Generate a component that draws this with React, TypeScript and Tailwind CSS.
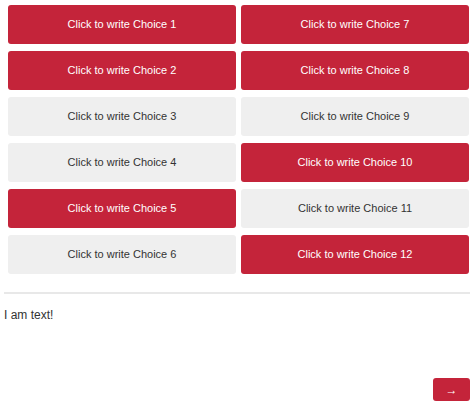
const choices = [
  { n: 1, on: true },
  { n: 7, on: true },
  { n: 2, on: true },
  { n: 8, on: true },
  { n: 3, on: false },
  { n: 9, on: false },
  { n: 4, on: false },
  { n: 10, on: true },
  { n: 5, on: true },
  { n: 11, on: false },
  { n: 6, on: false },
  { n: 12, on: true },
];

export default function App() {
  return (
    <div
      className="w-[474px] h-[406px] bg-white"
      style={{ fontFamily: '"Liberation Sans", Arial, sans-serif' }}
    >
      {/* choice grid */}
      <div className="grid grid-cols-2 gap-x-[5px] gap-y-[7px] pt-[5px] pl-[8px] pr-[5px]">
        {choices.map((c) => (
          <button
            key={c.n}
            className={
              c.on
                ? "h-[39px] rounded-[3px] bg-[#c4243a] text-white text-[11px]"
                : "h-[39px] rounded-[3px] bg-[#efefef] text-[#333333] text-[11px]"
            }
          >
            Click to write Choice {c.n}
          </button>
        ))}
      </div>

      <div className="mt-[18px] mx-[4px] border-t-2 border-[#e8e8e8]" />

      <p className="mt-[13px] pl-[4px] text-[12px] leading-[16px] text-[#333333]">
        I am text!
      </p>

      <div className="flex justify-end pr-[4px] mt-[55px]">
        <button className="w-[37px] h-[23px] rounded-[3px] bg-[#c4243a] text-white text-[12px] leading-none">
          →
        </button>
      </div>
    </div>
  );
}
